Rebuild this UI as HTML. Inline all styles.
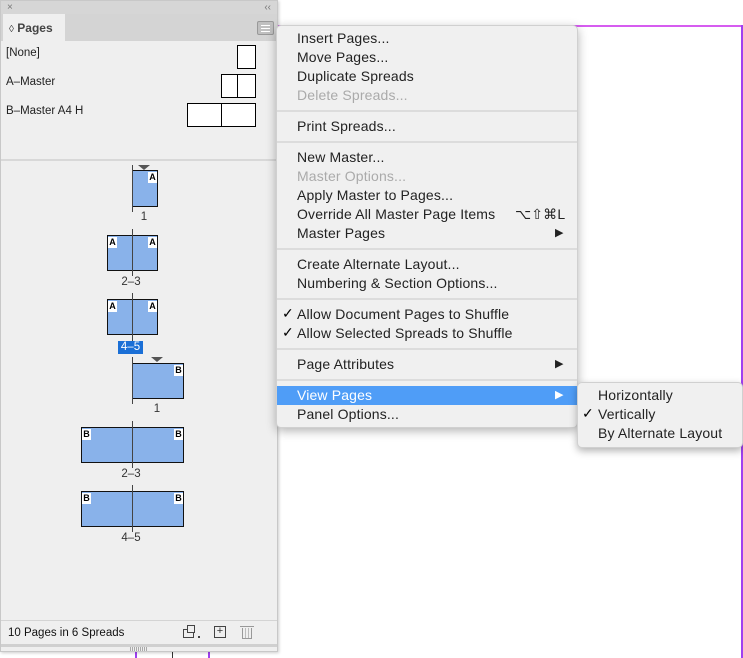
<!DOCTYPE html>
<html><head><style>
*{margin:0;padding:0;box-sizing:border-box}
body{width:743px;height:658px;background:#fff;position:relative;overflow:hidden;font-family:"Liberation Sans",sans-serif}
.a{position:absolute}
.t{font-size:11.5px;color:#222}
.pg{position:absolute;background:#89b2ea;border:1.5px solid #111}
.sp{position:absolute;width:1px;background:#444}
.lb{position:absolute;font-size:11.5px;color:#333;width:60px;text-align:center}
.bd{position:absolute;background:#fff;font-size:9px;font-weight:bold;line-height:10px;width:9px;height:11px;text-align:center;color:#000}
.mi{position:absolute;left:20px;font-size:14px;color:#222;line-height:19px;height:19px;letter-spacing:0.15px}
.dis{color:#aaa}
.sep{position:absolute;left:0;right:0;height:2px;background:#dcdcdc}
.ck{position:absolute;left:5px;font-size:14px}
</style></head><body>
<div class="a" style="left:0;top:25px;width:743px;height:2px;background:#d65cf0"></div>
<div class="a" style="left:741px;top:25px;width:2px;height:633px;background:#a040f0"></div>
<div class="a" style="left:208px;top:650px;width:2px;height:8px;background:#a040f0"></div>
<div class="a" style="left:172px;top:650px;width:1px;height:8px;background:#333"></div>
<div class="a" style="left:135px;top:650px;width:2px;height:8px;background:#a040f0"></div>

<!-- panel -->
<div class="a" style="left:0;top:0;width:278px;height:652px;background:#efefef;border:1px solid #c8c8c8;box-shadow:1px 1px 3px rgba(0,0,0,.2)">
 <div class="a" style="left:0;top:0;width:276px;height:13px;background:#d6d6d6;font-size:10px;color:#777;line-height:13px"><span style="position:absolute;left:6px">×</span><span style="position:absolute;right:6px">‹‹</span></div>
 <div class="a" style="left:0;top:13px;width:276px;height:27px;background:#d4d4d4"></div>
 <div class="a" style="left:2px;top:13px;width:62px;height:28px;background:#efefef;font-size:12px;font-weight:bold;color:#444;line-height:28px;padding-left:6px"><span style="font-weight:normal;font-size:10px">◊</span> Pages</div>
 <div class="a" style="left:256px;top:20px;width:17px;height:14px;background:#c0c0c0;border:1px solid #999;border-radius:2px"><div style="margin:3px 3px;height:7px;border-top:1px solid #fff;border-bottom:1px solid #fff;position:relative"><div style="position:absolute;top:2px;left:0;right:0;border-top:1px solid #fff"></div></div></div>
 <div class="a t" style="left:5px;top:46px">[None]</div>
 <div class="a t" style="left:5px;top:75px">A–Master</div>
 <div class="a t" style="left:5px;top:104px">B–Master A4 H</div>
 <div class="a" style="left:236px;top:44px;width:19px;height:24px;background:#fff;border:1px solid #000"></div>
 <div class="a" style="left:220px;top:73px;width:35px;height:24px;background:#fff;border:1px solid #000"></div>
 <div class="a" style="left:236px;top:73px;width:1px;height:24px;background:#000"></div>
 <div class="a" style="left:186px;top:102px;width:69px;height:24px;background:#fff;border:1px solid #000"></div>
 <div class="a" style="left:220px;top:102px;width:1px;height:24px;background:#000"></div>
 <div class="a" style="left:0;top:158px;width:276px;height:2px;background:#d8d8d8"></div>
 <div class="a" style="left:0;top:619px;width:276px;height:1px;background:#d4d4d4"></div>
 <div class="a" style="left:7px;top:626px;font-size:11.5px;color:#111">10 Pages in 6 Spreads</div>
 <div class="a" style="left:182px;top:628px;width:11px;height:9px;border:1px solid #444;background:#efefef"></div>
 <div class="a" style="left:186px;top:624px;width:8px;height:8px;border:1px solid #444;background:#efefef;transform:rotate(0deg)"></div>
 <div class="a" style="left:197px;top:635px;width:2px;height:2px;background:#444"></div>
 <div class="a" style="left:213px;top:625px;width:12px;height:12px;border:1px solid #444;font-size:11px;line-height:9px;text-align:center;color:#333">+</div>
 <div class="a" style="left:241px;top:627px;width:10px;height:11px;border:1px solid #999;border-top:none;background:repeating-linear-gradient(90deg,transparent 0 2px,#bbb 2px 3px)"></div>
 <div class="a" style="left:239px;top:625px;width:14px;height:1px;background:#999"></div>
 <div class="a" style="left:0;top:643px;width:276px;height:3px;background:#d0d0d0"></div>
 <div class="a" style="left:129px;top:646px;width:18px;height:4px;background:repeating-linear-gradient(90deg,#aaa 0 1px,transparent 1px 2px)"></div>
</div>

<!-- pages -->
<div class="a" style="left:138px;top:165px;width:0;height:0;border-left:6px solid transparent;border-right:6px solid transparent;border-top:5px solid #555"></div>
<div class="pg" style="left:132px;top:170px;width:26px;height:37px"></div><div class="bd" style="left:148px;top:172px">A</div>
<div class="sp" style="left:132px;top:165px;height:47px"></div>
<div class="lb" style="left:114px;top:211px">1</div>

<div class="pg" style="left:107px;top:235px;width:51px;height:36px"></div><div class="bd" style="left:108px;top:237px">A</div><div class="bd" style="left:148px;top:237px">A</div>
<div class="sp" style="left:132px;top:229px;height:47px"></div>
<div class="lb" style="left:101px;top:276px">2–3</div>

<div class="pg" style="left:107px;top:299px;width:51px;height:36px"></div><div class="bd" style="left:108px;top:301px">A</div><div class="bd" style="left:148px;top:301px">A</div>
<div class="sp" style="left:132px;top:293px;height:48px"></div>
<div class="a" style="left:118px;top:341px;width:25px;height:13px;background:#1a6fd6;color:#fff;font-size:11.5px;text-align:center;line-height:13px">4–5</div>

<div class="a" style="left:151px;top:357px;width:0;height:0;border-left:6px solid transparent;border-right:6px solid transparent;border-top:5px solid #555"></div>
<div class="pg" style="left:132px;top:363px;width:52px;height:36px"></div><div class="bd" style="left:174px;top:365px">B</div>
<div class="sp" style="left:132px;top:357px;height:47px"></div>
<div class="lb" style="left:127px;top:403px">1</div>

<div class="pg" style="left:81px;top:427px;width:103px;height:36px"></div><div class="bd" style="left:82px;top:429px">B</div><div class="bd" style="left:174px;top:429px">B</div>
<div class="sp" style="left:132px;top:421px;height:47px"></div>
<div class="lb" style="left:101px;top:468px">2–3</div>

<div class="pg" style="left:81px;top:491px;width:103px;height:36px"></div><div class="bd" style="left:82px;top:493px">B</div><div class="bd" style="left:174px;top:493px">B</div>
<div class="sp" style="left:132px;top:485px;height:47px"></div>
<div class="lb" style="left:101px;top:532px">4–5</div>

<!-- menu -->
<div class="a" style="left:276px;top:25px;width:302px;height:403px;background:#f0f0f0;border-radius:5px;box-shadow:0 3px 10px rgba(0,0,0,.3);border:1px solid #d0d0d0">
 <div class="mi" style="top:3px">Insert Pages...</div>
 <div class="mi" style="top:22px">Move Pages...</div>
 <div class="mi" style="top:41px">Duplicate Spreads</div>
 <div class="mi dis" style="top:60px">Delete Spreads...</div>
 <div class="sep" style="top:84px"></div>
 <div class="mi" style="top:91px">Print Spreads...</div>
 <div class="sep" style="top:115px"></div>
 <div class="mi" style="top:122px">New Master...</div>
 <div class="mi dis" style="top:141px">Master Options...</div>
 <div class="mi" style="top:160px">Apply Master to Pages...</div>
 <div class="mi" style="top:179px">Override All Master Page Items</div>
 <div class="mi" style="top:179px;left:238px">⌥⇧⌘L</div>
 <div class="mi" style="top:198px">Master Pages</div>
 <div class="mi" style="top:198px;left:278px;font-size:11px">▶</div>
 <div class="sep" style="top:222px"></div>
 <div class="mi" style="top:229px">Create Alternate Layout...</div>
 <div class="mi" style="top:248px">Numbering &amp; Section Options...</div>
 <div class="sep" style="top:272px"></div>
 <div class="ck" style="top:279px">✓</div><div class="mi" style="top:279px">Allow Document Pages to Shuffle</div>
 <div class="ck" style="top:298px">✓</div><div class="mi" style="top:298px">Allow Selected Spreads to Shuffle</div>
 <div class="sep" style="top:322px"></div>
 <div class="mi" style="top:329px">Page Attributes</div>
 <div class="mi" style="top:329px;left:278px;font-size:11px">▶</div>
 <div class="sep" style="top:353px"></div>
 <div class="a" style="left:0;top:360px;width:300px;height:19px;background:#4f9df7"></div>
 <div class="mi" style="top:360px;color:#fff">View Pages</div>
 <div class="mi" style="top:360px;left:278px;font-size:11px;color:#fff">▶</div>
 <div class="mi" style="top:379px">Panel Options...</div>
</div>
<div class="a" style="left:577px;top:382px;width:166px;height:66px;background:#f0f0f0;border-radius:5px;box-shadow:0 3px 8px rgba(0,0,0,.3);border:1px solid #d0d0d0">
 <div class="mi" style="top:3px">Horizontally</div>
 <div class="ck" style="top:22px;left:4px">✓</div><div class="mi" style="top:22px">Vertically</div>
 <div class="mi" style="top:41px">By Alternate Layout</div>
</div>
</body></html>
